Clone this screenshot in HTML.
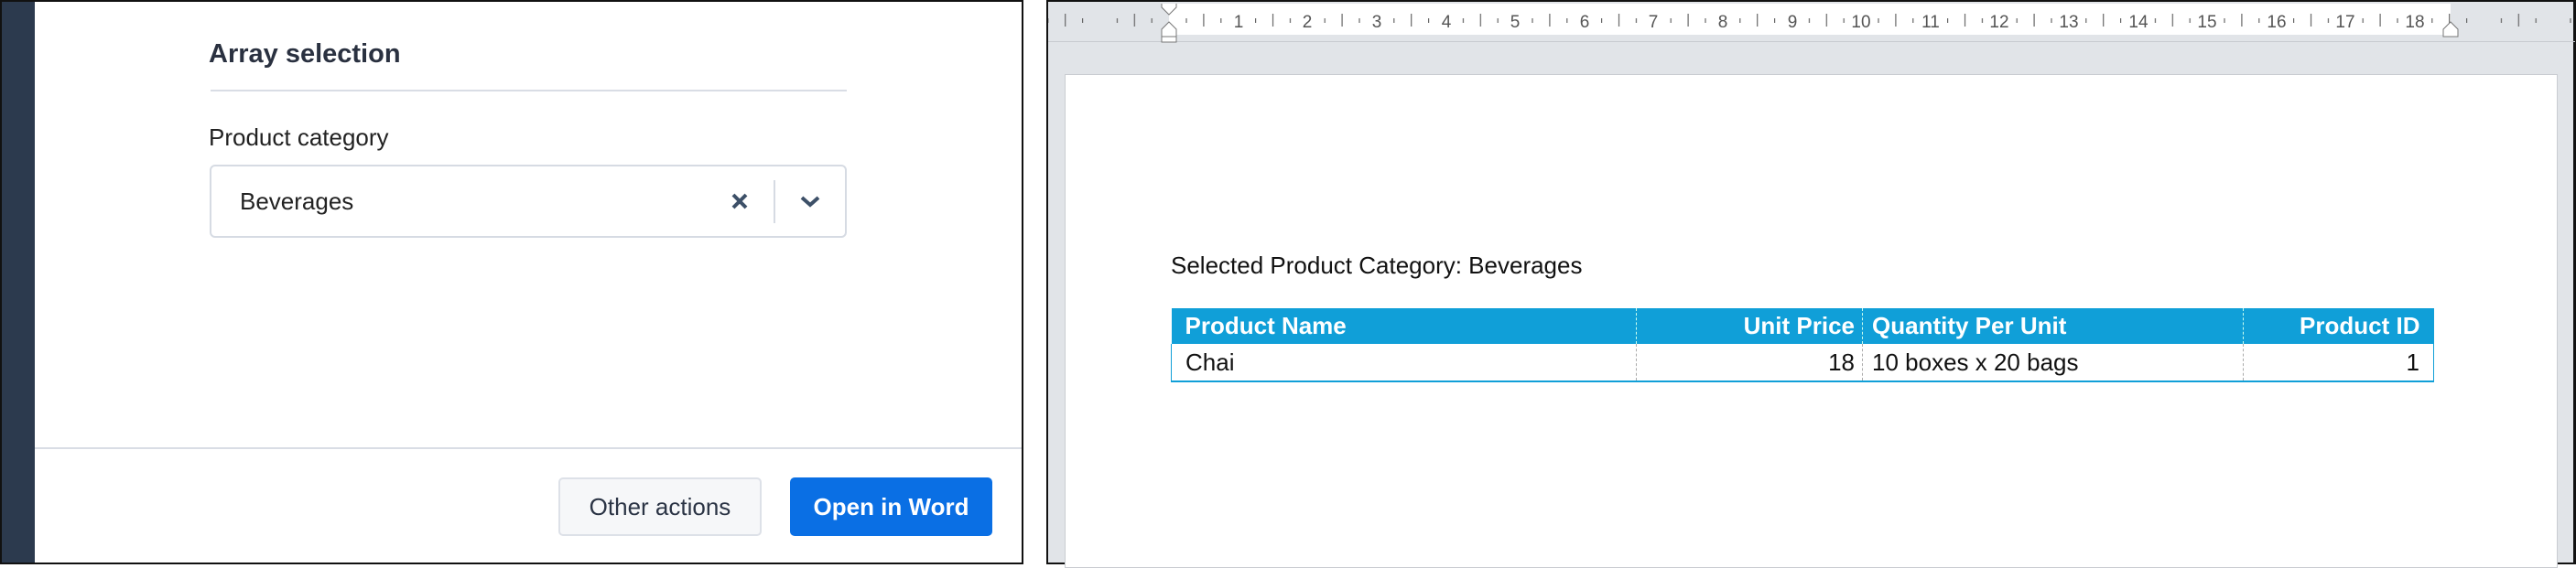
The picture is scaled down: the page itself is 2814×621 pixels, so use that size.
<!DOCTYPE html>
<html><head><meta charset="utf-8"><style>
*{margin:0;padding:0;box-sizing:border-box}
body{width:2814px;height:617px;background:#fff;position:relative;overflow:hidden;font-family:"Liberation Sans",sans-serif}
.abs{position:absolute}
#left{left:0;top:0;width:1118px;height:617px;border:2px solid #111;background:#fff}
#side{left:0;top:0;width:36px;height:613px;background:#2c3a4e}
.t{white-space:nowrap}
#right{left:1143px;top:0;width:1671px;height:617px;border:2px solid #111;border-right:3px solid #111;background:#e1e4e8}
table{border-collapse:collapse;font-size:26px}
</style></head><body>
<div id="left" class="abs">
 <div id="side" class="abs"></div>
 <div class="abs t" style="left:226px;top:41px;font-size:29px;font-weight:bold;color:#2a3140">Array selection</div>
 <div class="abs" style="left:228px;top:96px;width:695px;height:2px;background:#d9dde5"></div>
 <div class="abs t" style="left:226px;top:133px;font-size:26px;color:#222">Product category</div>
 <div class="abs" style="left:227px;top:178px;width:696px;height:80px;border:2px solid #d6dbe3;border-radius:6px"></div>
 <div class="abs t" style="left:260px;top:203px;font-size:26px;color:#222">Beverages</div>
 <svg class="abs" style="left:794px;top:206px" width="24" height="24" viewBox="0 0 24 24"><path d="M5 5L19 19M19 5L5 19" stroke="#3d5068" stroke-width="4"/></svg>
 <div class="abs" style="left:843px;top:195px;width:2px;height:47px;background:#d6dbe3"></div>
 <svg class="abs" style="left:870px;top:208px" width="26" height="20" viewBox="0 0 26 20"><path d="M4 6L13 14L22 6" stroke="#3d5068" stroke-width="4" fill="none"/></svg>
 <div class="abs" style="left:36px;top:487px;width:1078px;height:2px;background:#d9dde5"></div>
 <div class="abs t" style="left:608px;top:520px;width:222px;height:64px;border:2px solid #dde1e8;border-radius:5px;background:#f6f7f9;font-size:26px;color:#2b3445;text-align:center;line-height:60px">Other actions</div>
 <div class="abs t" style="left:861px;top:520px;width:221px;height:64px;border-radius:5px;background:#0a6fe4;font-size:26px;font-weight:bold;color:#fff;text-align:center;line-height:64px">Open in Word</div>
</div>
<div id="right" class="abs">
 <svg class="abs" style="left:0;top:0" width="1668" height="80">
  <defs><pattern id="tk" patternUnits="userSpaceOnUse" x="132" y="0" width="75.6" height="40">
   <rect x="18.4" y="18" width="1.2" height="5" fill="#666"/>
   <rect x="37.3" y="13" width="1.2" height="14" fill="#666"/>
   <rect x="56.2" y="18" width="1.2" height="5" fill="#666"/>
  </pattern></defs>
  <rect x="132" y="2" width="1400" height="34" fill="#fff"/>
  <rect x="0" y="0" width="1668" height="40" fill="url(#tk)"/>
  <rect x="0" y="43" width="1668" height="1" fill="#c8cbd0"/>
  <g font-family="Liberation Sans" font-size="19" fill="#555" text-anchor="middle">
   <text x="208" y="28">1</text><text x="283" y="28">2</text><text x="359" y="28">3</text><text x="435" y="28">4</text><text x="510" y="28">5</text><text x="586" y="28">6</text><text x="661" y="28">7</text><text x="737" y="28">8</text><text x="813" y="28">9</text><text x="888" y="28">10</text><text x="964" y="28">11</text><text x="1039" y="28">12</text><text x="1115" y="28">13</text><text x="1191" y="28">14</text><text x="1266" y="28">15</text><text x="1342" y="28">16</text><text x="1417" y="28">17</text><text x="1493" y="28">18</text>
  </g>
  <path d="M124 2V6L132 14L140 6V2" fill="#fff" stroke="#777"/>
  <path d="M124 38V30L132 22L140 30V38Z" fill="#fff" stroke="#777"/>
  <rect x="124" y="38" width="16" height="6" fill="#fff" stroke="#777"/>
  <path d="M1524 38V30L1532 22L1540 30V38Z" fill="#fff" stroke="#777"/>
 </svg>
 <div class="abs" style="left:18px;top:79px;width:1631px;height:540px;background:#fff;border:1px solid #c9ccd1"></div>
 <div class="abs t" style="left:134px;top:273px;font-size:26px;color:#111">Selected Product Category: Beverages</div>
 <table class="abs" style="left:134px;top:335px;width:1380px">
  <tr style="background:#109fd8;color:#fff;font-weight:bold;height:39px">
   <td style="width:508px;padding-left:15px">Product Name</td>
   <td style="width:247px;text-align:right;padding-right:8px;border-left:1px dashed #cfe">Unit Price</td>
   <td style="width:416px;padding-left:10px;border-left:1px dashed #cfe">Quantity Per Unit</td>
   <td style="text-align:right;padding-right:15px;border-left:1px dashed #cfe">Product ID</td>
  </tr>
  <tr style="height:41px;color:#111">
   <td style="padding-left:15px;border-left:1px solid #109fd8;border-bottom:2px solid #109fd8">Chai</td>
   <td style="text-align:right;padding-right:8px;border-left:1px dashed #aaa;border-bottom:2px solid #109fd8">18</td>
   <td style="padding-left:10px;border-left:1px dashed #aaa;border-bottom:2px solid #109fd8">10 boxes x 20 bags</td>
   <td style="text-align:right;padding-right:15px;border-left:1px dashed #aaa;border-right:1px solid #109fd8;border-bottom:2px solid #109fd8">1</td>
  </tr>
 </table>
</div>
</body></html>
